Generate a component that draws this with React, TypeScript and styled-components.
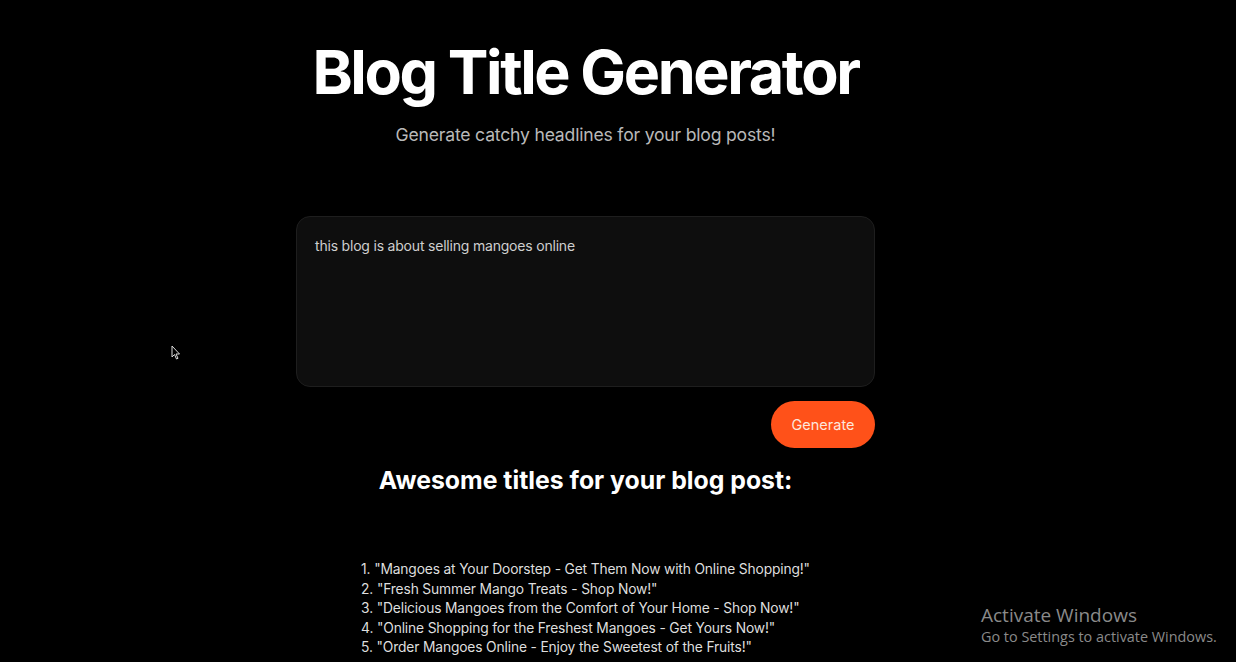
import React from 'react';
import styled, { createGlobalStyle } from 'styled-components';

const GlobalStyle = createGlobalStyle`
  html, body {
    margin: 0;
    padding: 0;
    background: #000;
  }
  body {
    font-family: Inter, "Noto Sans", sans-serif;
    color: #fff;
    overflow: hidden;
  }
`;

const Page = styled.div`
  position: relative;
  width: 1236px;
  height: 662px;
  background: #000;
  overflow: hidden;
`;

const Column = styled.main`
  width: 579px;
  margin-left: 296px;
  display: flex;
  flex-direction: column;
  align-items: center;
`;

const Title = styled.h1`
  margin: 37px 0 0;
  font-size: 61px;
  font-weight: 700;
  letter-spacing: -2.4px;
  line-height: 70px;
  color: #fff;
  white-space: nowrap;
`;

const Subtitle = styled.p`
  margin: 16px 0 0;
  font-size: 17.6px;
  font-weight: 400;
  color: #b9b9b9;
  letter-spacing: -0.2px;
  line-height: 24px;
`;

const Prompt = styled.textarea`
  box-sizing: border-box;
  margin-top: 69px;
  width: 579px;
  height: 171px;
  padding: 20px 18px;
  background: #0e0e0e;
  border: 1px solid #1e1e1e;
  border-radius: 14px;
  color: #cfcfcf;
  font-family: Inter, "Noto Sans", sans-serif;
  font-size: 14px;
  letter-spacing: -0.2px;
  line-height: 18px;
  resize: none;
  outline: none;
`;

const Actions = styled.div`
  align-self: stretch;
  display: flex;
  justify-content: flex-end;
  margin-top: 14px;
`;

const GenerateButton = styled.button`
  width: 104px;
  height: 47px;
  border: none;
  border-radius: 24px;
  background: #ff5119;
  color: #fde6dc;
  font-family: Inter, "Noto Sans", sans-serif;
  font-size: 14.5px;
  font-weight: 400;
  cursor: pointer;
`;

const ResultsHeading = styled.h2`
  margin: 17px 0 0;
  font-size: 24.8px;
  font-weight: 700;
  letter-spacing: 0;
  line-height: 30px;
  color: #fff;
`;

const TitleList = styled.ol`
  margin: 65px 0 0;
  padding: 0;
  list-style: none;
  text-align: left;
`;

const TitleItem = styled.li`
  font-size: 13.8px;
  line-height: 19.5px;
  color: #dedede;
  letter-spacing: -0.15px;
  white-space: nowrap;
`;

const Watermark = styled.div`
  position: absolute;
  left: 981px;
  top: 603px;
  font-family: "Segoe UI", "Open Sans", "Noto Sans", sans-serif;
  color: #8a8a8a;
`;

const WatermarkTitle = styled.div`
  font-size: 19px;
  line-height: 24px;
`;

const WatermarkText = styled.div`
  font-size: 14.4px;
  line-height: 20px;
`;

const Cursor = styled.svg`
  position: absolute;
  left: 171px;
  top: 345px;
`;

const titles = [
  '"Mangoes at Your Doorstep - Get Them Now with Online Shopping!"',
  '"Fresh Summer Mango Treats - Shop Now!"',
  '"Delicious Mangoes from the Comfort of Your Home - Shop Now!"',
  '"Online Shopping for the Freshest Mangoes - Get Yours Now!"',
  '"Order Mangoes Online - Enjoy the Sweetest of the Fruits!"',
];

export default function App() {
  return (
    <Page>
      <GlobalStyle />
      <Column>
        <Title>Blog Title Generator</Title>
        <Subtitle>Generate catchy headlines for your blog posts!</Subtitle>
        <Prompt defaultValue="this blog is about selling mangoes online" />
        <Actions>
          <GenerateButton>Generate</GenerateButton>
        </Actions>
        <ResultsHeading>Awesome titles for your blog post:</ResultsHeading>
        <TitleList>
          {titles.map((t, i) => (
            <TitleItem key={i}>
              {i + 1}. {t}
            </TitleItem>
          ))}
        </TitleList>
      </Column>
      <Cursor width="10" height="15" viewBox="0 0 10 15">
        <path d="M1 1 L1 12 L3.5 9.5 L5.5 14 L7 13.3 L5 9 L8.5 9 Z" fill="#000" stroke="#ddd" strokeWidth="1" />
      </Cursor>
      <Watermark>
        <WatermarkTitle>Activate Windows</WatermarkTitle>
        <WatermarkText>Go to Settings to activate Windows.</WatermarkText>
      </Watermark>
    </Page>
  );
}
